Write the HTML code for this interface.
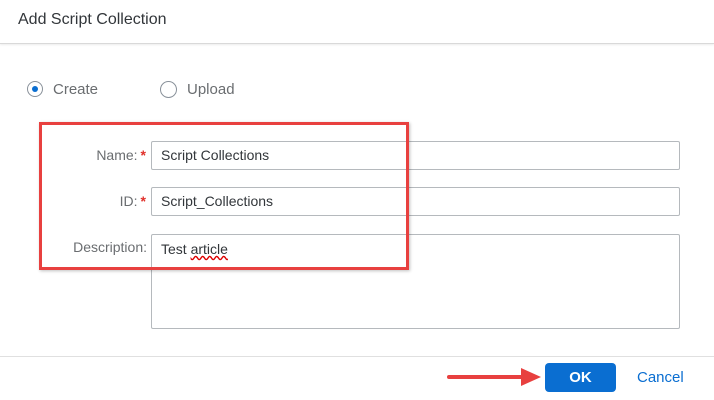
<!DOCTYPE html><html><head><style>
body{margin:0;width:714px;height:400px;background:#fff;font-family:"Liberation Sans",sans-serif;position:relative;overflow:hidden;color:#32363a}
.a{position:absolute}
.lbl{font-size:14px;color:#6a6d70;text-align:right;width:130px;left:0}
.inp{left:151px;width:529px;border:1px solid #b5b9bd;border-radius:2px;background:#fff;font-size:14px;box-sizing:border-box;padding-left:9px}
.st{color:#e0302a;font-weight:bold;margin-left:3px}
</style></head><body>
<div class="a" style="left:0;top:0;width:714px;height:43px;border-bottom:1px solid #d9d9d9;box-shadow:0 1px 2px rgba(0,0,0,.08)"></div>
<div class="a" style="left:18px;top:11px;font-size:16px;color:#32363a">Add Script Collection</div>
<div class="a" style="left:27px;top:81px;width:16px;height:16px;border:1px solid #89919a;border-radius:50%;box-sizing:border-box"></div>
<div class="a" style="left:32px;top:86px;width:6px;height:6px;background:#0a6ed1;border-radius:50%"></div>
<div class="a" style="left:53px;top:81px;font-size:15px;color:#6a6d70">Create</div>
<div class="a" style="left:160px;top:81px;width:17px;height:17px;border:1px solid #89919a;border-radius:50%;box-sizing:border-box"></div>
<div class="a" style="left:187px;top:81px;font-size:15px;color:#6a6d70">Upload</div>
<div class="a lbl" style="left:16px;top:147px">Name:<span class="st">*</span></div>
<div class="a inp" style="top:141px;height:29px;line-height:27px">Script Collections</div>
<div class="a lbl" style="left:16px;top:193px">ID:<span class="st">*</span></div>
<div class="a inp" style="top:187px;height:29px;line-height:27px">Script_Collections</div>
<div class="a lbl" style="left:17px;top:239px">Description:</div>
<div class="a inp" style="top:234px;height:95px;padding-top:6px">Test <span style="text-decoration:underline wavy #d00">article</span></div>
<div class="a" style="left:39px;top:122px;width:370px;height:148px;border:3px solid #e8403f;box-sizing:border-box;box-shadow:1px 1px 3px rgba(0,0,0,.25)"></div>
<div class="a" style="left:0;top:356px;width:714px;height:1px;background:#e0e0e0"></div>
<svg class="a" style="left:445px;top:366px" width="100" height="22"><line x1="4" y1="11" x2="80" y2="11" stroke="#e8403f" stroke-width="4" stroke-linecap="round"/><polygon points="76,2 96,11 76,20" fill="#e8403f"/></svg>
<div class="a" style="left:545px;top:363px;width:71px;height:29px;background:#0a6ed1;border-radius:4px;color:#fff;font-weight:bold;font-size:15px;text-align:center;line-height:29px">OK</div>
<div class="a" style="left:637px;top:369px;font-size:15px;color:#0a6ed1">Cancel</div>
</body></html>
